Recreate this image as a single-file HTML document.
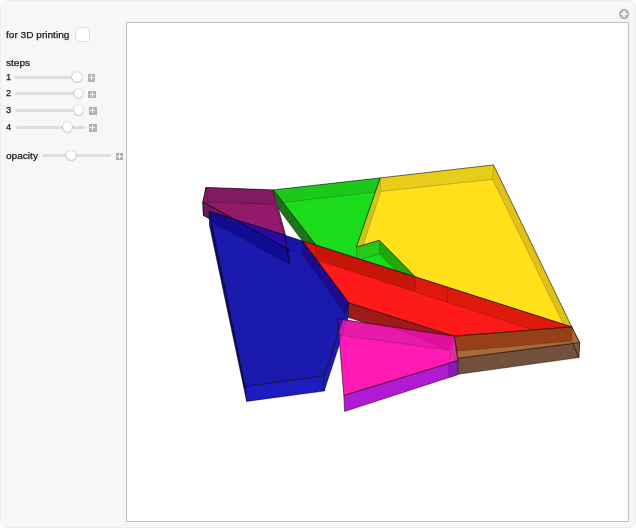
<!DOCTYPE html>
<html><head><meta charset="utf-8">
<style>
html,body{margin:0;padding:0;background:#fff;}
body{width:636px;height:529px;overflow:hidden;position:relative;font-family:"Liberation Sans",sans-serif;font-size:9.3px;color:#1a1a1a;}
#panel{position:absolute;left:0;top:0;width:634px;height:526px;background:#f7f7f7;border:1px solid #eeeeee;border-radius:7px;}
#view{position:absolute;left:126px;top:22px;width:501px;height:498px;background:#fff;border:1px solid #c0c0c0;}
.lbl{position:absolute;left:6px;line-height:12px;white-space:nowrap;will-change:transform;-webkit-text-stroke:0.25px #1a1a1a;transform:scaleX(1.085);transform-origin:0 0;}
.trk{position:absolute;height:3px;border-radius:1.5px;background:#dedede;}
.th{position:absolute;width:9.6px;height:9.6px;border-radius:50%;background:#fff;box-shadow:0 0 1px rgba(0,0,0,.35),0 0.5px 1.5px rgba(0,0,0,.25);}
.pl{position:absolute;width:7.5px;height:7.5px;background:#b2b2b2;}
.pl:before{content:"";position:absolute;left:3.2px;top:1.2px;width:1.1px;height:5.1px;background:#fff;}
.pl:after{content:"";position:absolute;left:1.2px;top:3.2px;width:5.1px;height:1.1px;background:#fff;}
#cb{position:absolute;left:75px;top:27px;width:13px;height:13px;border:1px solid #dcdcdc;border-radius:4px;background:#fff;}
.d{transform:scaleX(1.0);}
</style></head><body>
<div id="panel"></div>
<svg style="position:absolute;left:618px;top:8px" width="12" height="12" viewBox="0 0 12 12"><circle cx="6.1" cy="6" r="5.15" fill="#b3b3b3"/><rect x="2.9" y="4.9" width="6.4" height="2.2" fill="#f1f1f1"/><rect x="5" y="2.8" width="2.2" height="6.4" fill="#f1f1f1"/></svg>
<div class="lbl" style="top:29px">for 3D printing</div>
<div id="cb"></div>
<div class="lbl" style="top:57px">steps</div>

<div class="lbl d" style="top:71.3px">1</div>
<div class="trk" style="left:14px;top:75.8px;width:68px"></div><div class="th" style="left:72.2px;top:72.4px"></div><div class="pl" style="left:87.6px;top:74px"></div>
<div class="lbl d" style="top:87.4px">2</div>
<div class="trk" style="left:15px;top:92.2px;width:68px"></div><div class="th" style="left:73.5px;top:88.9px"></div><div class="pl" style="left:88.4px;top:90.7px"></div>
<div class="lbl d" style="top:104.3px">3</div>
<div class="trk" style="left:15px;top:108.5px;width:68px"></div><div class="th" style="left:73.5px;top:105.2px"></div><div class="pl" style="left:89px;top:107px"></div>
<div class="lbl d" style="top:121.3px">4</div>
<div class="trk" style="left:15.5px;top:125.5px;width:69.5px"></div><div class="th" style="left:62.7px;top:122.2px"></div><div class="pl" style="left:89.2px;top:124px"></div>
<div class="lbl" style="top:150px">opacity</div>
<div class="trk" style="left:41.7px;top:154px;width:69.6px"></div><div class="th" style="left:66px;top:150.6px"></div><div class="pl" style="left:115.6px;top:152.5px"></div>

<div id="view">
<svg id="g" width="501" height="498" viewBox="127 23 501 498" style="position:absolute;left:0;top:0">
<polygon points="273.4,189.9 274.7,203.5 316.3,259.8 316.0,245.1" fill="#1c741c" stroke="rgba(0,0,0,0.6)" stroke-width="0.8" stroke-linejoin="round"/>
<polygon points="202.9,201.9 289.6,250.3 289.6,264.5 203.5,215.4" fill="#6b1a55" stroke="rgba(0,0,0,0.6)" stroke-width="0.8" stroke-linejoin="round"/>
<polygon points="206.0,187.4 202.9,201.9 203.5,215.4 207.9,202.2" fill="#85195f" stroke="rgba(0,0,0,0.6)" stroke-width="0.8" stroke-linejoin="round"/>
<polygon points="206.0,187.4 273.4,189.9 289.6,250.3 202.9,201.9" fill="#93196a"/>
<polygon points="206.0,187.4 273.4,189.9 274.3,204.2 207.9,202.2" fill="#7f1a63"/>
<line x1="207.9" y1="202.2" x2="274.3" y2="204.2" stroke="rgba(0,0,0,0.22)" stroke-width="0.8"/>
<line x1="206.0" y1="187.4" x2="207.9" y2="202.2" stroke="rgba(0,0,0,0.22)" stroke-width="0.8"/>
<line x1="207.9" y1="202.2" x2="202.9" y2="201.9" stroke="rgba(0,0,0,0.22)" stroke-width="0.8"/>
<line x1="274.3" y1="204.2" x2="284.3" y2="234.3" stroke="rgba(0,0,0,0.22)" stroke-width="0.8"/>
<polygon points="206.0,187.4 273.4,189.9 289.6,250.3 202.9,201.9" fill="none" stroke="rgba(0,0,0,0.7)" stroke-width="0.8" stroke-linejoin="round"/>
<polygon points="273.4,189.9 380.3,177.9 356.5,247.0 379.3,240.2 415.5,276.9 316.0,245.1" fill="#1adc1a"/>
<polygon points="273.4,189.9 380.3,177.9 380.6,191.4 283.1,202.5" fill="#1dc81d"/>
<polygon points="273.4,189.9 283.1,202.5 278.6,208.7 276.6,203.5" fill="#1a6c1a"/>
<polygon points="356.5,247.0 379.3,240.2 379.3,254.0 360.9,259.5 356.8,258.2" fill="#26c81a"/>
<polygon points="379.3,240.2 415.5,276.9 395.6,270.5 379.3,254.0" fill="#20a80a"/>
<line x1="283.1" y1="202.5" x2="380.6" y2="191.4" stroke="rgba(0,0,0,0.22)" stroke-width="0.8"/>
<line x1="379.3" y1="240.2" x2="379.3" y2="254.0" stroke="rgba(0,0,0,0.22)" stroke-width="0.8"/>
<line x1="379.3" y1="254.0" x2="360.9" y2="259.5" stroke="rgba(0,0,0,0.22)" stroke-width="0.8"/>
<line x1="379.3" y1="254.0" x2="395.6" y2="270.5" stroke="rgba(0,0,0,0.22)" stroke-width="0.8"/>
<line x1="356.5" y1="247.0" x2="356.8" y2="258.2" stroke="rgba(0,0,0,0.22)" stroke-width="0.8"/>
<line x1="273.4" y1="189.9" x2="274.7" y2="203.5" stroke="rgba(0,0,0,0.22)" stroke-width="0.8"/>
<polygon points="273.4,189.9 380.3,177.9 356.5,247.0 379.3,240.2 415.5,276.9 316.0,245.1" fill="none" stroke="rgba(0,0,0,0.7)" stroke-width="0.8" stroke-linejoin="round"/>
<polygon points="380.3,177.9 493.5,164.9 571.8,327.0 415.5,276.9 379.3,240.2 356.5,247.0" fill="#ffe01a"/>
<polygon points="380.3,177.9 493.5,164.9 492.5,179.4 380.6,191.4" fill="#e8cc1a"/>
<polygon points="493.5,164.9 571.8,327.0 563.5,324.3 492.5,179.4" fill="#e0c01a"/>
<polygon points="380.3,177.9 380.6,191.4 363.3,245.0 356.5,247.0" fill="#c8c81a"/>
<line x1="380.6" y1="191.4" x2="492.5" y2="179.4" stroke="rgba(0,0,0,0.22)" stroke-width="0.8"/>
<line x1="493.5" y1="164.9" x2="492.5" y2="179.4" stroke="rgba(0,0,0,0.22)" stroke-width="0.8"/>
<line x1="492.5" y1="179.4" x2="563.5" y2="324.3" stroke="rgba(0,0,0,0.22)" stroke-width="0.8"/>
<line x1="380.6" y1="191.4" x2="363.3" y2="245.0" stroke="rgba(0,0,0,0.22)" stroke-width="0.8"/>
<line x1="380.3" y1="177.9" x2="380.6" y2="191.4" stroke="rgba(0,0,0,0.22)" stroke-width="0.8"/>
<polygon points="380.3,177.9 493.5,164.9 571.8,327.0 415.5,276.9 379.3,240.2 356.5,247.0" fill="none" stroke="rgba(0,0,0,0.7)" stroke-width="0.8" stroke-linejoin="round"/>
<polygon points="348.6,302.6 454.3,336.2 455.4,351.2 348.2,317.4" fill="#a01a1a" stroke="rgba(0,0,0,0.6)" stroke-width="0.8" stroke-linejoin="round"/>
<polygon points="302.4,240.9 571.8,327.0 454.3,336.2 348.6,302.6" fill="#ff1a1a"/>
<polygon points="316.0,245.1 415.5,276.9 415.5,291.9 316.3,259.8" fill="#c6160a"/>
<polygon points="415.5,276.9 571.8,327.0 533.4,330.0 415.5,291.9" fill="#de1a0a"/>
<polygon points="302.4,240.9 316.0,245.1 316.3,259.8" fill="#d8140a"/>
<line x1="415.5" y1="276.9" x2="415.5" y2="291.9" stroke="rgba(0,0,0,0.22)" stroke-width="0.8"/>
<line x1="316.0" y1="245.1" x2="316.3" y2="259.8" stroke="rgba(0,0,0,0.22)" stroke-width="0.8"/>
<line x1="316.3" y1="259.8" x2="533.4" y2="330.0" stroke="rgba(0,0,0,0.22)" stroke-width="0.8"/>
<line x1="447.3" y1="287.1" x2="447.3" y2="302.0" stroke="rgba(0,0,0,0.22)" stroke-width="0.8"/>
<line x1="563.5" y1="324.3" x2="571.8" y2="341.1" stroke="rgba(0,0,0,0.12)" stroke-width="0.8"/>
<polygon points="302.4,240.9 571.8,327.0 454.3,336.2 348.6,302.6" fill="none" stroke="rgba(0,0,0,0.7)" stroke-width="0.8" stroke-linejoin="round"/>
<polygon points="209.4,211.3 209.5,225.5 246.7,401.4 245.4,386.3" fill="#0a0a78" stroke="rgba(0,0,0,0.6)" stroke-width="0.8" stroke-linejoin="round"/>
<polygon points="245.4,386.3 324.2,375.9 324.2,391.0 246.7,401.4" fill="#1c1cc0" stroke="rgba(0,0,0,0.6)" stroke-width="0.8" stroke-linejoin="round"/>
<polygon points="348.6,302.6 348.2,317.4 324.2,391.0 324.2,375.9" fill="#1b1bb8" stroke="rgba(0,0,0,0.6)" stroke-width="0.8" stroke-linejoin="round"/>
<polygon points="209.4,211.3 302.4,240.9 348.6,302.6 324.2,375.9 245.4,386.3" fill="#1a1aaf"/>
<polygon points="209.4,211.3 302.4,240.9 302.7,254.5 209.5,225.5" fill="#1717a7"/>
<polygon points="302.4,240.9 348.6,302.6 345.1,313.4 302.7,254.5" fill="#200a8c"/>
<polygon points="232.5,218.4 284.3,234.3 289.6,250.3" fill="#2a0aa0"/>
<polygon points="232.5,218.4 289.6,250.3 289.6,264.5 209.6,220.5 209.4,211.3" fill="#120c94"/>
<line x1="302.7" y1="254.5" x2="345.1" y2="313.4" stroke="rgba(0,0,0,0.22)" stroke-width="0.8"/>
<line x1="302.4" y1="240.9" x2="302.7" y2="254.5" stroke="rgba(0,0,0,0.22)" stroke-width="0.8"/>
<line x1="209.6" y1="220.5" x2="289.6" y2="264.5" stroke="rgba(0,0,0,0.22)" stroke-width="0.8"/>
<line x1="232.5" y1="218.4" x2="289.6" y2="250.3" stroke="rgba(0,0,0,0.75)" stroke-width="0.9"/>
<line x1="284.3" y1="234.3" x2="289.6" y2="264.5" stroke="rgba(0,0,0,0.7)" stroke-width="0.9"/>
<line x1="209.5" y1="225.5" x2="289.6" y2="251.0" stroke="rgba(0,0,0,0.12)" stroke-width="0.8"/>
<line x1="289.6" y1="251.0" x2="302.7" y2="254.5" stroke="rgba(0,0,0,0.22)" stroke-width="0.8"/>
<polygon points="209.4,211.3 302.4,240.9 348.6,302.6 324.2,375.9 245.4,386.3" fill="none" stroke="rgba(0,0,0,0.7)" stroke-width="0.8" stroke-linejoin="round"/>
<polygon points="202.9,201.9 232.5,218.4 209.4,211.3 209.0,218.3 203.5,215.4" fill="#6b1a55" stroke="rgba(0,0,0,0.6)" stroke-width="0.8" stroke-linejoin="round"/>
<polygon points="458.0,358.2 579.6,342.5 578.8,357.6 457.7,374.3" fill="#73503c" stroke="rgba(0,0,0,0.6)" stroke-width="0.8" stroke-linejoin="round"/>
<polygon points="571.8,327.0 579.6,342.5 578.8,357.6 571.8,341.1" fill="#7d573f" stroke="rgba(0,0,0,0.6)" stroke-width="0.8" stroke-linejoin="round"/>
<polygon points="454.3,336.2 571.8,327.0 579.6,342.5 458.0,358.2" fill="#a86a3a"/>
<polygon points="454.3,336.2 571.8,327.0 571.8,341.1 455.4,351.2" fill="#96401a"/>
<line x1="571.8" y1="327.0" x2="571.8" y2="341.1" stroke="rgba(0,0,0,0.22)" stroke-width="0.8"/>
<line x1="455.4" y1="351.2" x2="571.8" y2="341.1" stroke="rgba(0,0,0,0.22)" stroke-width="0.8"/>
<line x1="571.8" y1="341.1" x2="578.8" y2="357.6" stroke="rgba(0,0,0,0.22)" stroke-width="0.8"/>
<polygon points="454.3,336.2 571.8,327.0 579.6,342.5 458.0,358.2" fill="none" stroke="rgba(0,0,0,0.7)" stroke-width="0.8" stroke-linejoin="round"/>
<polygon points="343.8,395.3 457.7,360.6 457.7,374.7 344.5,411.5" fill="#b01ad2" stroke="rgba(0,0,0,0.6)" stroke-width="0.8" stroke-linejoin="round"/>
<polygon points="337.6,318.8 454.3,336.2 457.7,360.6 343.8,395.3" fill="#ff1ab4"/>
<polygon points="337.6,318.8 454.3,336.2 449.4,350.1 339.0,335.0" fill="#e81aaa"/>
<polygon points="389.7,326.6 454.3,336.2 449.4,350.1" fill="#e0109a"/>
<polygon points="454.3,336.2 449.4,359.8 457.6,359.8" fill="#e0309a"/>
<polygon points="448.8,362.6 457.7,360.6 457.7,374.7 448.8,377.4" fill="#8a1ab4" stroke="rgba(0,0,0,0.22)" stroke-width="0.8" stroke-linejoin="round"/>
<polygon points="337.6,318.8 342.9,319.6 338.6,332.6" fill="#3a10b4"/>
<polygon points="342.9,319.6 347.2,320.2 339.5,344.1 338.6,332.6" fill="#c41ab8"/>
<line x1="342.9" y1="319.6" x2="338.6" y2="332.6" stroke="rgba(0,0,0,0.4)" stroke-width="0.8"/>
<line x1="339.0" y1="335.0" x2="449.4" y2="350.1" stroke="rgba(0,0,0,0.22)" stroke-width="0.8"/>
<line x1="454.3" y1="336.2" x2="449.4" y2="359.8" stroke="rgba(0,0,0,0.22)" stroke-width="0.8"/>
<line x1="389.7" y1="326.6" x2="449.4" y2="350.1" stroke="rgba(0,0,0,0.1)" stroke-width="0.8"/>
<line x1="337.6" y1="318.8" x2="339.0" y2="335.0" stroke="rgba(0,0,0,0.22)" stroke-width="0.8"/>
<polygon points="337.6,318.8 454.3,336.2 457.7,360.6 343.8,395.3" fill="none" stroke="rgba(0,0,0,0.7)" stroke-width="0.8" stroke-linejoin="round"/>
</svg>
</div>
</body></html>
